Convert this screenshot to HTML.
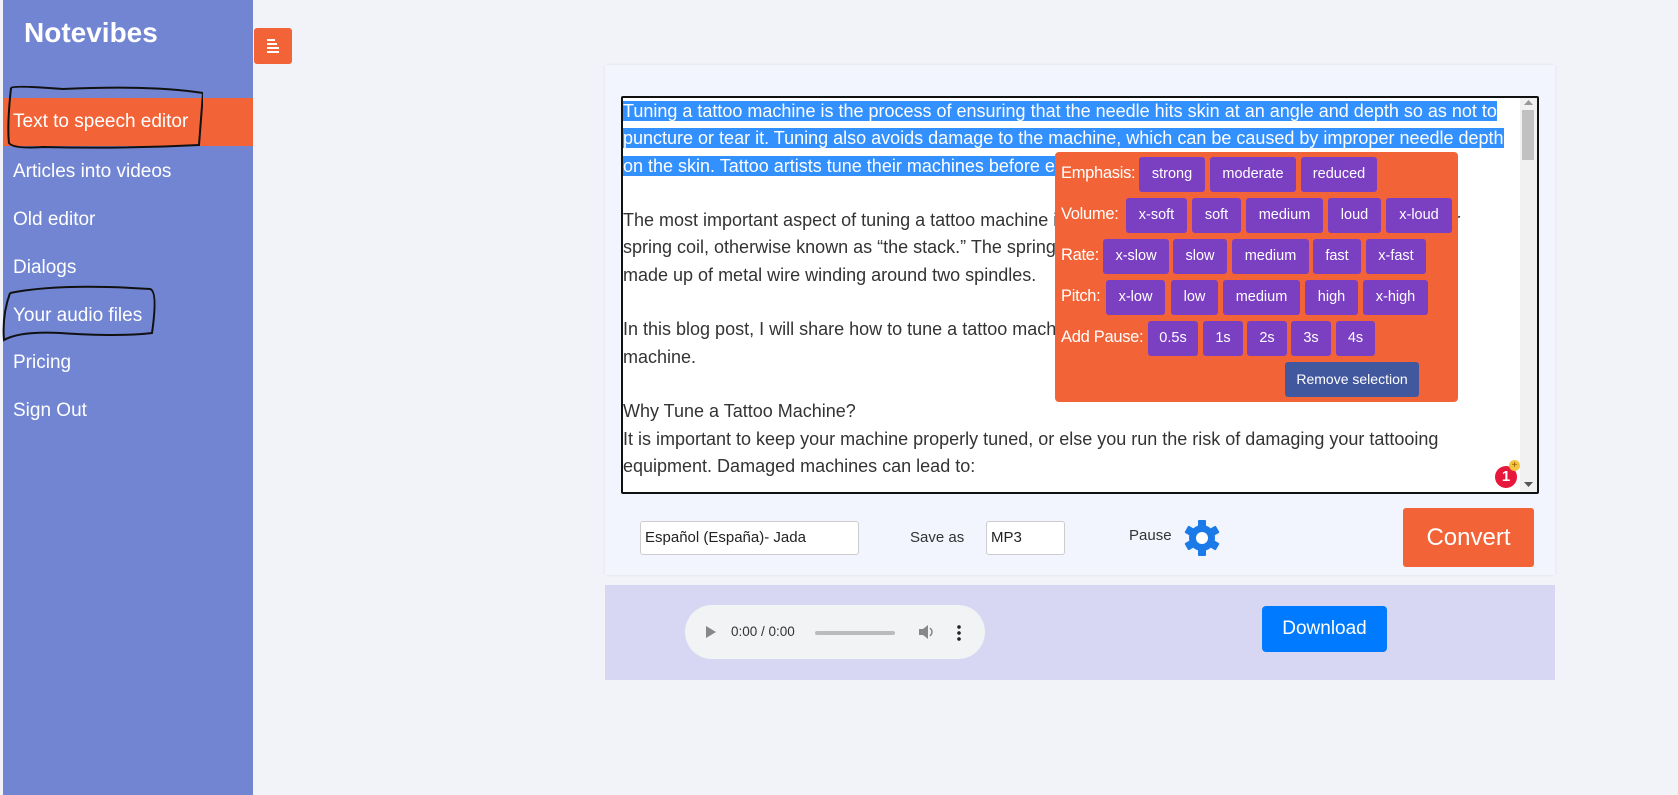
<!DOCTYPE html>
<html><head><meta charset="utf-8"><style>
*{box-sizing:border-box;margin:0;padding:0}
body{width:1678px;height:795px;background:#f2f3f9;font-family:"Liberation Sans",sans-serif;position:relative;overflow:hidden}
.a{position:absolute}
#side{left:3px;top:0;width:250px;height:795px;background:#7185d3}
#side .t{left:21px;top:17px;color:#fff;font-size:28px;font-weight:bold}
.it{left:0;width:250px;height:48px;color:#fff;font-size:19px;line-height:48px;padding-left:10px}
.act{background:#f26437}
#ham{left:254px;top:28px;width:38px;height:36px;background:#f26437;border-radius:3px}
#ham i{position:absolute;left:13px;height:2px;background:#fff}
#card{left:605px;top:65px;width:950px;height:510px;background:#f2f5fd;box-shadow:0 0 3px rgba(0,0,0,.08)}
#ta{left:621px;top:96px;width:918px;height:398px;background:#fff;border:2px solid #111;border-radius:2px;overflow:hidden}
#txt{left:0px;top:0px;width:900px;font-size:18px;line-height:27.3px;color:#333}
.hl{background:#3390ff;color:#fff}
#sb{right:0;top:0;width:17px;height:394px;background:#f1f1f1}
#pop{left:1055px;top:152px;width:403px;height:250px;background:#f26437;border-radius:4px}
.lb{color:#fff;font-size:16.5px;letter-spacing:-0.3px;position:absolute;left:6px}
.b{position:absolute;height:35px;background:#7b3fc2;color:#fff;font-size:14.5px;line-height:35px;text-align:center;border-radius:3px}
.box{background:#fff;border:1px solid #ccc;border-radius:3px;font-size:15px;color:#222;padding-left:4px;line-height:32px}
</style></head><body>
<div id="side" class="a">
<div class="a t">Notevibes</div>
<div class="a it act" style="top:98px">Text to speech editor</div>
<div class="a it" style="top:148px">Articles into videos</div>
<div class="a it" style="top:196px">Old editor</div>
<div class="a it" style="top:244px">Dialogs</div>
<div class="a it" style="top:292px">Your audio files</div>
<div class="a it" style="top:339px">Pricing</div>
<div class="a it" style="top:387px">Sign Out</div>
<svg class="a" style="left:0;top:85px" width="200" height="70"><path d="M8 3 Q10 0 60 4 Q150 0 200 8 L196 60 Q120 64 40 62 Q10 64 6 58 Q4 40 8 3" fill="none" stroke="#111" stroke-width="2"/></svg>
<svg class="a" style="left:-3px;top:285px" width="160" height="60"><path d="M10 8 Q60 -2 150 4 Q158 6 152 48 Q120 52 60 48 Q20 46 4 55 Q2 30 10 8" fill="none" stroke="#111" stroke-width="2"/></svg>
</div>
<div id="ham" class="a"><i style="top:11px;width:8px"></i><i style="top:15px;width:10px"></i><i style="top:19px;width:12px"></i><i style="top:23px;width:12px"></i></div>
<div id="card" class="a"></div>
<div id="ta" class="a">
<div id="txt" class="a"><span class="hl">Tuning a tattoo machine is the process of ensuring that the needle hits skin at an angle and depth so as not to<br>puncture or tear it. Tuning also avoids damage to the machine, which can be caused by improper needle depth<br>on the skin. Tattoo artists tune their machines before each session.</span><br><br>The most important aspect of tuning a tattoo machine is making sure that there are no loose wires in your<br>spring coil, otherwise known as “the stack.” The springs in a tattoo machine are made of coils; they’re<br>made up of metal wire winding around two spindles.<br><br>In this blog post, I will share how to tune a tattoo machine so that you can get the best tattoo<br>machine.<br><br>Why Tune a Tattoo Machine?<br>It is important to keep your machine properly tuned, or else you run the risk of damaging your tattooing<br>equipment. Damaged machines can lead to:</div>
<div id="sb" class="a"><div class="a" style="left:2px;top:12px;width:12px;height:50px;background:#c1c1c1"></div>
<svg class="a" style="left:4px;top:2px" width="9" height="6"><path d="M0 5 L4.5 0 L9 5Z" fill="#999"/></svg>
<svg class="a" style="left:4px;top:384px" width="9" height="6"><path d="M0 0 L4.5 5 L9 0Z" fill="#555"/></svg></div>
<div class="a" style="left:872px;top:368px;width:22px;height:22px;border-radius:50%;background:#e8173c;color:#fff;font-weight:bold;font-size:15px;text-align:center;line-height:22px">1</div>
<div class="a" style="left:886px;top:362px;width:11px;height:11px;border-radius:50%;background:#f5c542;font-size:10px;line-height:11px;text-align:center;color:#8a5a00">+</div>
</div>
<div id="pop" class="a">
<div class="lb" style="top:12px">Emphasis:</div>
<div class="b" style="left:84px;top:5px;width:66px">strong</div><div class="b" style="left:155px;top:5px;width:86px">moderate</div><div class="b" style="left:246px;top:5px;width:76px">reduced</div>
<div class="lb" style="top:53px">Volume:</div>
<div class="b" style="left:71px;top:46px;width:61px">x-soft</div><div class="b" style="left:137px;top:46px;width:49px">soft</div><div class="b" style="left:191px;top:46px;width:77px">medium</div><div class="b" style="left:273px;top:46px;width:53px">loud</div><div class="b" style="left:331px;top:46px;width:66px">x-loud</div>
<div class="lb" style="top:94px">Rate:</div>
<div class="b" style="left:48px;top:87px;width:66px">x-slow</div><div class="b" style="left:118px;top:87px;width:54px">slow</div><div class="b" style="left:177px;top:87px;width:77px">medium</div><div class="b" style="left:258px;top:87px;width:48px">fast</div><div class="b" style="left:311px;top:87px;width:60px">x-fast</div>
<div class="lb" style="top:135px">Pitch:</div>
<div class="b" style="left:51px;top:128px;width:59px">x-low</div><div class="b" style="left:116px;top:128px;width:47px">low</div><div class="b" style="left:168px;top:128px;width:77px">medium</div><div class="b" style="left:250px;top:128px;width:53px">high</div><div class="b" style="left:308px;top:128px;width:65px">x-high</div>
<div class="lb" style="top:176px">Add Pause:</div>
<div class="b" style="left:93px;top:169px;width:50px">0.5s</div><div class="b" style="left:148px;top:169px;width:40px">1s</div><div class="b" style="left:192px;top:169px;width:40px">2s</div><div class="b" style="left:236px;top:169px;width:40px">3s</div><div class="b" style="left:281px;top:169px;width:39px">4s</div>
<div class="b" style="left:230px;top:210px;width:134px;background:#42589e;font-size:14px">Remove selection</div>
</div>
<div class="a box" style="left:640px;top:521px;width:219px;height:34px">Español (España)- Jada</div>
<div class="a" style="left:910px;top:529px;font-size:15px;color:#333">Save as</div>
<div class="a box" style="left:986px;top:521px;width:79px;height:34px">MP3</div>
<div class="a" style="left:1129px;top:527px;font-size:15px;color:#333">Pause</div>
<svg class="a" style="left:1183px;top:519px" width="38" height="38" viewBox="0 0 38 38"><g fill="#1a7ae8"><circle cx="19" cy="19" r="13"/><rect x="15" y="1" width="8" height="36" rx="1"/><rect x="15" y="1" width="8" height="36" rx="1" transform="rotate(60 19 19)"/><rect x="15" y="1" width="8" height="36" rx="1" transform="rotate(120 19 19)"/></g><circle cx="19" cy="19" r="6" fill="#fff"/></svg>
<div class="a" style="left:1403px;top:508px;width:131px;height:59px;background:#f26437;border-radius:3px;color:#fff;font-size:24px;line-height:59px;text-align:center">Convert</div>
<div class="a" style="left:605px;top:585px;width:950px;height:95px;background:#d7d7f3"></div>
<div class="a" style="left:685px;top:605px;width:300px;height:54px;background:#f1f3f4;border-radius:27px"></div>
<svg class="a" style="left:705px;top:625px" width="12" height="14"><path d="M1 1 L11 7 L1 13Z" fill="#888"/></svg>
<div class="a" style="left:731px;top:624px;font-size:13.5px;color:#333">0:00 / 0:00</div>
<div class="a" style="left:815px;top:631px;width:80px;height:4px;background:#bbb;border-radius:2px"></div>
<svg class="a" style="left:918px;top:624px" width="18" height="16"><path d="M1 5 H5 L10 1 V15 L5 11 H1Z" fill="#888"/><path d="M12 4 Q16 8 12 12" stroke="#888" fill="none" stroke-width="1.5"/></svg>
<div class="a" style="left:957px;top:624px;width:4px;height:18px;background:radial-gradient(circle,#222 1.6px,transparent 2px) 0 0/4px 6px"></div>
<div class="a" style="left:1262px;top:606px;width:125px;height:46px;background:#007bff;border-radius:4px;color:#fff;font-size:19px;line-height:46px;text-align:center">Download</div>
</body></html>
